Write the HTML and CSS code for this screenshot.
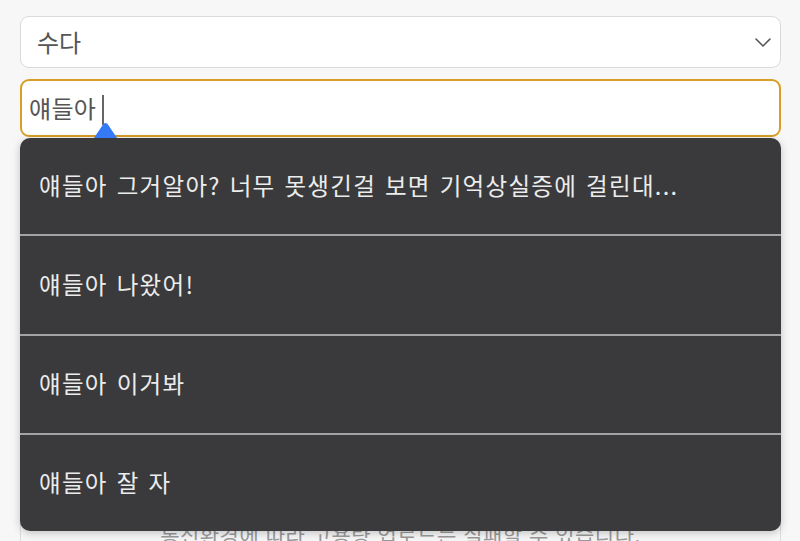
FILE: index.html
```html
<!DOCTYPE html>
<html lang="ko">
<head>
<meta charset="utf-8">
<link rel="stylesheet" href="styles.css">
</head>
<body>
<div class="page">
  <div class="select">
    <span class="select-text">수다</span>
    <svg class="chevron" width="16" height="9" viewBox="0 0 16 9"><path d="M1 1 L8 8 L15 1" fill="none" stroke="#555" stroke-width="1.6" stroke-linecap="round" stroke-linejoin="round"/></svg>
  </div>
  <div class="input-wrap">
    <div class="input"><span class="input-text">얘들아</span><span class="caret"></span></div>
    <svg class="handle" width="23" height="15" viewBox="0 0 23 15"><path d="M11.5 0 C12.7 0 13.5 0.8 14.3 2 L23 15 L0 15 L8.7 2 C9.5 0.8 10.3 0 11.5 0 Z" fill="#3479f6"/></svg>
  </div>
  <div class="upload">
    <p class="upload-note">통신환경에 따라 고용량 업로드는 실패할 수 있습니다.</p>
  </div>
  <ul class="suggestions">
    <li class="suggestion s1">얘들아 그거알아? 너무 못생긴걸 보면 기억상실증에 걸린대...</li>
    <li class="suggestion s2">얘들아 나왔어!</li>
    <li class="suggestion s3">얘들아 이거봐</li>
    <li class="suggestion s4">얘들아 잘 자</li>
  </ul>
</div>
</body>
</html>
```

FILE: styles.css
```css
* { box-sizing: border-box; }
html, body { margin: 0; padding: 0; }
body {
  background: #f7f7f8;
  font-family: "Noto Sans CJK KR", "Noto Sans", sans-serif;
  width: 800px;
  height: 541px;
  overflow: hidden;
}
.page {
  position: relative;
  padding: 16px 19px 0 20px;
  display: flex;
  flex-direction: column;
}
.select {
  height: 52px;
  background: #fff;
  border: 1px solid #dadadd;
  border-radius: 9px;
  display: flex;
  align-items: center;
  justify-content: space-between;
  padding: 0 9px 0 16px;
}
.select-text {
  font-size: 24px;
  color: #555;
  line-height: 1;
}
.input-wrap {
  position: relative;
  margin-top: 11px;
}
.input {
  height: 58px;
  background: #fff;
  border: 2.5px solid #d89e25;
  border-radius: 9px;
  display: flex;
  align-items: center;
  padding-left: 7px;
}
.input-text {
  font-size: 24px;
  color: #555;
  line-height: 1;
  letter-spacing: 0.3px;
}
.caret {
  width: 1.6px;
  height: 30px;
  background: #666;
  margin-left: 6px;
  margin-top: 3px;
}
.handle {
  position: absolute;
  left: 74px;
  top: 44px;
  z-index: 3;
}
.upload {
  margin-top: 10px;
  height: 394px;
  border: 1px solid #dcdcdc;
  border-bottom: none;
  background: #f7f7f8;
  display: flex;
  align-items: flex-end;
  justify-content: center;
}
.upload-note {
  margin: 0 0 -6px 0;
  font-size: 21px;
  letter-spacing: 0.5px;
  color: #9a9a9a;
  line-height: 26px;
}
.suggestions {
  position: absolute;
  top: 138px;
  left: 20px;
  width: 761px;
  margin: 0;
  padding: 0;
  list-style: none;
  background: #3a3a3c;
  border-radius: 10px;
  box-shadow: 0 2px 8px rgba(0,0,0,0.22);
  z-index: 2;
  overflow: hidden;
}
.suggestion {
  display: flex;
  align-items: center;
  padding: 0 0 3px 19px;
  font-size: 23.5px;
  letter-spacing: 1.3px;
  word-spacing: 1px;
  color: #ececec;
  border-bottom: 2px solid #a3a3a5;
}
.s1 { height: 98px; }
.s2 { height: 100px; }
.s3 { height: 99px; }
.s4 { height: 96px; border-bottom: none; }
```
